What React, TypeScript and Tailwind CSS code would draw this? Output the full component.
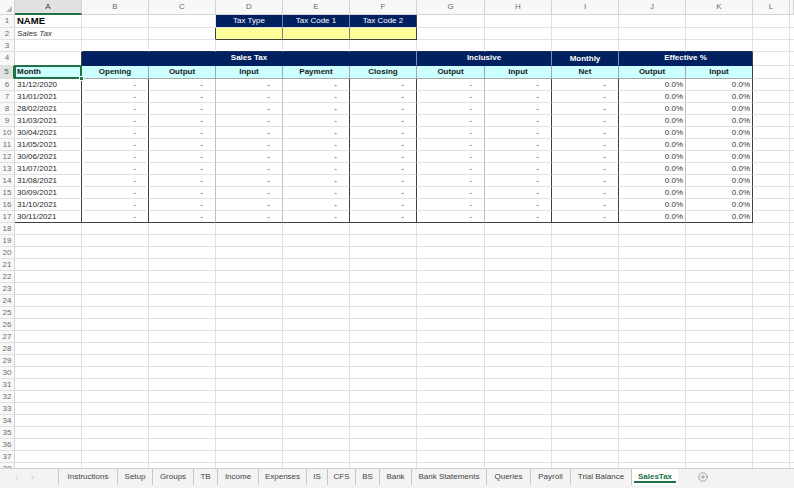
import type { ReactNode } from "react";
import { twMerge } from "tailwind-merge";
import { ChevronLeft, ChevronRight, CirclePlus } from "lucide-react";

const GRID =
  "grid grid-cols-[15px_67px_67px_67px_67px_67px_67px_68px_67px_67px_67px_67px_37px_1fr]";

const LETTERS = ["A", "B", "C", "D", "E", "F", "G", "H", "I", "J", "K", "L", ""];

const base =
  "h-full min-w-0 flex items-center overflow-hidden whitespace-nowrap border-r border-b border-r-[#e1e1e1] border-b-[#e1e1e1] px-[2px] text-[8px] leading-none text-[#262626]";

const SPAN: Record<number, string> = {
  1: "",
  2: "col-span-2",
  3: "col-span-3",
  5: "col-span-5",
};

// right border per data column A..K
const DATA_RIGHT = [
  "border-r-[#3f3f3f]",
  "border-r-[#3f3f3f]",
  "border-r-[#bfbfbf]",
  "border-r-[#bfbfbf]",
  "border-r-[#3f3f3f]",
  "border-r-[#3f3f3f]",
  "border-r-[#bfbfbf]",
  "border-r-[#3f3f3f]",
  "border-r-[#3f3f3f]",
  "border-r-[#bfbfbf]",
  "border-r-[#3f3f3f]",
];

const MONTHS = [
  "31/12/2020",
  "31/01/2021",
  "28/02/2021",
  "31/03/2021",
  "30/04/2021",
  "31/05/2021",
  "30/06/2021",
  "31/07/2021",
  "31/08/2021",
  "30/09/2021",
  "31/10/2021",
  "30/11/2021",
];

const TABS = [
  { name: "Instructions", w: "w-[59px]" },
  { name: "Setup", w: "w-[35px]" },
  { name: "Groups", w: "w-[41px]" },
  { name: "TB", w: "w-[24px]" },
  { name: "Income", w: "w-[41px]" },
  { name: "Expenses", w: "w-[48px]" },
  { name: "IS", w: "w-[21px]" },
  { name: "CFS", w: "w-[28px]" },
  { name: "BS", w: "w-[24px]" },
  { name: "Bank", w: "w-[32px]" },
  { name: "Bank Statements", w: "w-[75px]" },
  { name: "Queries", w: "w-[44px]" },
  { name: "Payroll", w: "w-[40px]" },
  { name: "Trial Balance", w: "w-[61px]" },
];

type CellDef = { span?: number; className?: string; children?: ReactNode };

function Row({
  n,
  h,
  cells,
  active,
}: {
  n: number;
  h: string;
  cells: CellDef[];
  active?: boolean;
}) {
  const used = cells.reduce((s, c) => s + (c.span ?? 1), 0);
  const filler = Array.from({ length: Math.max(0, 13 - used) });
  return (
    <div className={twMerge(GRID, h)}>
      <div
        className={twMerge(
          "h-full flex items-center justify-center border-r border-b border-r-[#d4d4d4] border-b-[#e1e1e1] bg-[#f8f8f8] text-[8px] leading-none text-[#6b6b6b]",
          active && "bg-[#e1e1e1] border-r-2 border-r-[#217346] text-[#217346]",
        )}
      >
        {n}
      </div>
      {cells.map((c, i) => (
        <div key={i} className={twMerge(base, SPAN[c.span ?? 1], c.className)}>
          {c.children}
        </div>
      ))}
      {filler.map((_, i) => (
        <div key={"f" + i} className={base} />
      ))}
    </div>
  );
}

function ColumnHeader() {
  return (
    <div className={twMerge(GRID, "h-[15px]")}>
      <div className="relative h-full border-r border-b border-[#d4d4d4] bg-[#f8f8f8]">
        <div className="absolute right-[2px] bottom-[2px] h-0 w-0 border-l-[6px] border-t-[6px] border-l-transparent border-t-transparent border-b-0 border-r-[6px] border-r-[#b8b8b8]" />
      </div>
      {LETTERS.map((l, i) => (
        <div
          key={i}
          className={twMerge(
            "h-full flex items-center justify-center border-r border-b border-r-[#d4d4d4] border-b-[#d4d4d4] bg-[#f8f8f8] text-[8px] leading-none text-[#6b6b6b]",
            i === 0 && "bg-[#e1e1e1] border-b-2 border-b-[#217346] text-[#3b3b3b]",
          )}
        >
          {l}
        </div>
      ))}
    </div>
  );
}

const navy = "bg-[#002060] text-white justify-center";
const cyan =
  "bg-[#ccffff] justify-center font-bold text-[#1a1a1a] border-r-[#a6a6a6] border-b-[#a6a6a6]";

function DataRow({ n, month, last }: { n: number; month: string; last: boolean }) {
  const bottom = last ? "border-b-[#3f3f3f]" : "";
  const cells: CellDef[] = [
    { className: twMerge(DATA_RIGHT[0], bottom, "pl-[2px]"), children: month },
  ];
  for (let i = 1; i <= 8; i++) {
    cells.push({
      className: twMerge(DATA_RIGHT[i], bottom, "justify-end pr-[12px] text-[#444]"),
      children: "-",
    });
  }
  for (let i = 9; i <= 10; i++) {
    cells.push({
      className: twMerge(DATA_RIGHT[i], bottom, "justify-end pr-[2px] text-[#333]"),
      children: "0.0%",
    });
  }
  return <Row n={n} h="h-[12px]" cells={cells} />;
}

function TabBar() {
  return (
    <div className="border-t border-[#d0d0d0] bg-[#f3f3f3]">
      <div className="flex h-[16px] items-stretch text-[8px] leading-none text-[#444]">
        <div className="flex w-[59px] items-center gap-[9px] border-r border-[#c6c6c6] pl-[13px] text-[#a8a8a8]">
          <ChevronLeft size={7} strokeWidth={2} />
          <ChevronRight size={7} strokeWidth={2} />
        </div>
        {TABS.map((t) => (
          <div
            key={t.name}
            className={twMerge(
              "flex items-center justify-center whitespace-nowrap border-r border-[#c6c6c6]",
              t.w,
            )}
          >
            {t.name}
          </div>
        ))}
        <div className="relative flex w-[46px] items-center justify-center bg-white font-bold text-[#217346]">
          SalesTax
          <div className="absolute bottom-[2px] left-[2px] right-[2px] h-[2px] bg-[#217346]" />
        </div>
        <div className="flex w-[50px] items-center justify-center text-[#777]">
          <CirclePlus size={10} strokeWidth={1.5} />
        </div>
      </div>
      <div className="h-[4px]" />
    </div>
  );
}

export default function App() {
  const blankRows = Array.from({ length: 20 }, (_, i) => 18 + i);
  const dark = "border-r-[#3f3f3f]";
  return (
    <div className="h-[488px] w-[794px] overflow-hidden bg-white font-['Liberation_Sans',Arial,sans-serif]">
      <ColumnHeader />

      <Row
        n={1}
        h="h-[13px]"
        cells={[
          { className: "text-[9.5px] font-bold text-black", children: "NAME" },
          {},
          {},
          { className: twMerge(navy, "border-r-[#6d7fa3]"), children: "Tax Type" },
          { className: twMerge(navy, "border-r-[#6d7fa3]"), children: "Tax Code 1" },
          { className: twMerge(navy, dark), children: "Tax Code 2" },
        ]}
      />
      <Row
        n={2}
        h="h-[12px]"
        cells={[
          { className: "italic text-[#333]", children: "Sales Tax" },
          {},
          { className: dark },
          { className: "bg-[#ffff99] border-r-[#808080] border-b-[#3f3f3f]" },
          { className: "bg-[#ffff99] border-r-[#808080] border-b-[#3f3f3f]" },
          { className: twMerge("bg-[#ffff99] border-b-[#3f3f3f]", dark) },
        ]}
      />
      <Row
        n={3}
        h="h-[12px]"
        cells={[
          {},
          ...Array.from({ length: 10 }, () => ({ className: "border-b-[#1a2a5a]" })),
        ]}
      />
      <Row
        n={4}
        h="h-[13.5px]"
        cells={[
          { className: dark },
          {
            span: 5,
            className: twMerge(navy, "font-bold border-r-[#7d8db5] border-b-[#002060]"),
            children: "Sales Tax",
          },
          {
            span: 2,
            className: twMerge(navy, "font-bold border-r-[#7d8db5] border-b-[#002060]"),
            children: "Inclusive",
          },
          {
            className: twMerge(navy, "font-bold border-r-[#7d8db5] border-b-[#002060] pt-[2px]"),
            children: "Monthly",
          },
          {
            span: 2,
            className: twMerge(navy, "font-bold border-b-[#002060]", dark),
            children: "Effective %",
          },
        ]}
      />
      <Row
        n={5}
        h="h-[13.5px]"
        active
        cells={[
          {
            className: twMerge(cyan, "relative justify-start overflow-visible pl-[2px]", dark),
            children: (
              <>
                Month
                <div className="pointer-events-none absolute -top-px -left-px -right-px -bottom-px border-2 border-[#217346]" />
                <div className="absolute -right-[3px] -bottom-[3px] h-[5px] w-[5px] border border-white bg-[#217346]" />
              </>
            ),
          },
          { className: cyan, children: "Opening" },
          { className: cyan, children: "Output" },
          { className: cyan, children: "Input" },
          { className: cyan, children: "Payment" },
          { className: cyan, children: "Closing" },
          { className: cyan, children: "Output" },
          { className: cyan, children: "Input" },
          { className: cyan, children: "Net" },
          { className: cyan, children: "Output" },
          { className: twMerge(cyan, dark), children: "Input" },
        ]}
      />

      {MONTHS.map((m, i) => (
        <DataRow key={m} n={6 + i} month={m} last={i === MONTHS.length - 1} />
      ))}

      {blankRows.map((n) => (
        <Row key={n} n={n} h="h-[12px]" cells={[]} />
      ))}

      <div className="h-[5px] overflow-hidden">
        <Row n={38} h="h-[12px]" cells={[]} />
      </div>

      <TabBar />
    </div>
  );
}
